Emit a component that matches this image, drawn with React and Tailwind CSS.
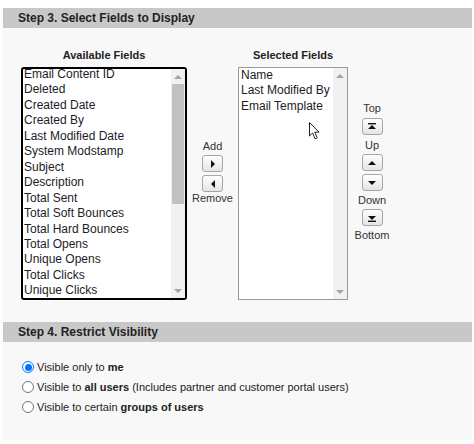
import React from "react";

const available = [
  "Email Content ID",
  "Deleted",
  "Created Date",
  "Created By",
  "Last Modified Date",
  "System Modstamp",
  "Subject",
  "Description",
  "Total Sent",
  "Total Soft Bounces",
  "Total Hard Bounces",
  "Total Opens",
  "Unique Opens",
  "Total Clicks",
  "Unique Clicks",
];

const selected = ["Name", "Last Modified By", "Email Template"];

function Arrow({ dir, bar }) {
  // little black triangles for the move buttons
  const tri = {
    right: "M3 1 L7 5 L3 9 Z",
    left: "M7 1 L3 5 L7 9 Z",
    up: "M1 7 L5 3 L9 7 Z",
    down: "M1 3 L5 7 L9 3 Z",
  }[dir];
  return (
    <svg width="10" height="10" viewBox="0 0 10 10">
      <path d={tri} fill="#111" />
      {bar === "top" && <rect x="1" y="1" width="8" height="1.4" fill="#111" />}
      {bar === "bottom" && <rect x="1" y="7.6" width="8" height="1.4" fill="#111" />}
    </svg>
  );
}

function MoveButton({ dir, bar }) {
  return (
    <button className="w-[21px] h-[17px] flex items-center justify-center rounded-[3px] border border-[#a6a6a6] bg-gradient-to-b from-white to-[#e4e4e4]">
      <Arrow dir={dir} bar={bar} />
    </button>
  );
}

function ScrollArrow({ up }) {
  return (
    <svg width="8" height="5" viewBox="0 0 8 5">
      <path d={up ? "M0 5 L4 1 L8 5 Z" : "M0 0 L4 4 L8 0 Z"} fill="#a3a3a3" />
    </svg>
  );
}

function Radio({ checked }) {
  if (checked) {
    return (
      <span className="w-[12px] h-[12px] rounded-full border border-[#0075ff] bg-white flex items-center justify-center">
        <span className="w-[7px] h-[7px] rounded-full bg-[#0075ff]" />
      </span>
    );
  }
  return <span className="w-[12px] h-[12px] rounded-full border border-[#767676] bg-white" />;
}

function SectionHeader({ children }) {
  return (
    <div className="h-[20px] bg-[#c8c8c8] pl-[15px] flex items-center text-[12px] font-bold text-[#222]">
      {children}
    </div>
  );
}

export default function App() {
  return (
    <div className="w-[474px] h-[444px] bg-white pt-[8px] pl-[3px] pr-[2px] font-['Liberation_Sans',Arial,sans-serif]">
      <div className="h-[432px] bg-[#f8f8f8] flex flex-col">
        <SectionHeader>Step 3. Select Fields to Display</SectionHeader>

        <div className="flex mt-[19px] pl-[18px]">
          {/* available */}
          <div className="w-[166px] flex flex-col">
            <div className="text-center text-[11px] leading-[16px] font-bold text-[#222] mb-[4px]">Available Fields</div>
            <div className="h-[233px] border-2 border-black rounded-[3px] bg-white flex overflow-hidden">
              <div className="flex-1 pl-[1px] -mt-[2px] text-[12px] leading-[15.45px] text-[#1c1c28]">
                {available.map((f) => (
                  <div key={f} className="whitespace-nowrap">{f}</div>
                ))}
              </div>
              <div className="w-[14px] bg-[#f1f1f1] flex flex-col items-center">
                <div className="h-[14px] flex items-center justify-center"><ScrollArrow up /></div>
                <div className="w-[12px] h-[120px] mt-[1px] bg-[#c1c1c1]" />
                <div className="flex-1" />
                <div className="h-[14px] flex items-center justify-center"><ScrollArrow /></div>
              </div>
            </div>
          </div>

          {/* add / remove */}
          <div className="w-[51px] flex flex-col items-center text-[11px] leading-[14px] text-[#333]">
            <div className="mt-[92px]">Add</div>
            <div className="mt-[2px]"><MoveButton dir="right" /></div>
            <div className="mt-[3px]"><MoveButton dir="left" /></div>
            <div className="-mt-[1px]">Remove</div>
          </div>

          {/* selected */}
          <div className="w-[110px] flex flex-col">
            <div className="text-center text-[11px] leading-[16px] font-bold text-[#222] mb-[4px]">Selected Fields</div>
            <div className="relative h-[233px] border border-[#9a9a9a] bg-white flex">
              <div className="flex-1 pl-[2px] text-[12px] leading-[15.45px] text-[#1c1c28]">
                {selected.map((f) => (
                  <div key={f} className="whitespace-nowrap">{f}</div>
                ))}
              </div>
              <div className="w-[14px] bg-[#f1f1f1] flex flex-col items-center justify-between">
                <div className="h-[14px] flex items-center justify-center"><ScrollArrow up /></div>
                <div className="h-[14px] flex items-center justify-center"><ScrollArrow /></div>
              </div>
              {/* mouse pointer */}
              <svg className="absolute left-[70px] top-[54px]" width="12" height="18" viewBox="0 0 12 18">
                <path d="M0.5 0.5 L0.5 14 L3.6 11 L6 16.8 L8.2 15.8 L5.8 10.2 L10 10.2 Z" fill="white" stroke="#222" strokeWidth="1" strokeLinejoin="round" />
              </svg>
            </div>
          </div>

          {/* order */}
          <div className="w-[48px] flex flex-col items-center text-[11px] leading-[14px] text-[#333]">
            <div className="mt-[54px]">Top</div>
            <div className="mt-[3px]"><MoveButton dir="up" bar="top" /></div>
            <div className="mt-[3px]">Up</div>
            <div className="mt-[2px]"><MoveButton dir="up" /></div>
            <div className="mt-[3px]"><MoveButton dir="down" /></div>
            <div className="mt-[2px]">Down</div>
            <div className="mt-[2px]"><MoveButton dir="down" bar="bottom" /></div>
            <div className="mt-[2px]">Bottom</div>
          </div>
        </div>

        <div className="mt-[22px]">
          <SectionHeader>Step 4. Restrict Visibility</SectionHeader>
        </div>

        <div className="mt-[15px] pl-[19px] flex flex-col text-[11px] text-[#222]">
          <label className="h-[20px] flex items-center gap-[3px]">
            <Radio checked />
            <span>Visible only to <b>me</b></span>
          </label>
          <label className="h-[20px] flex items-center gap-[3px]">
            <Radio />
            <span>Visible to <b>all users</b> (Includes partner and customer portal users)</span>
          </label>
          <label className="h-[20px] flex items-center gap-[3px]">
            <Radio />
            <span>Visible to certain <b>groups of users</b></span>
          </label>
        </div>
      </div>
    </div>
  );
}
